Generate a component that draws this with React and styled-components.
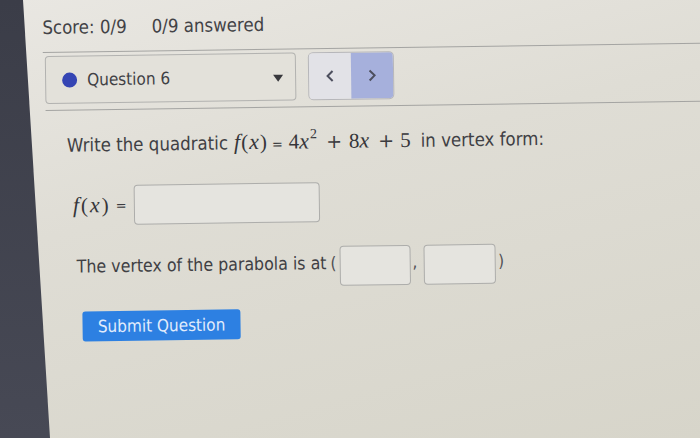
import React from "react";
import styled, { createGlobalStyle } from "styled-components";

const GlobalStyle = createGlobalStyle`
  html, body {
    margin: 0;
    padding: 0;
    background: #3c3e48;
  }
  * {
    box-sizing: border-box;
  }
`;

const Page = styled.div`
  width: 700px;
  height: 438px;
  overflow: hidden;
  background: linear-gradient(180deg, #3b3d48 0%, #474955 100%);
  font-family: "DejaVu Sans Condensed", "DejaVu Sans", sans-serif;
  color: #48484c;
`;

// photographed screen: slanted bezel on the left, content slightly tilted
const Screen = styled.div`
  height: 100%;
  padding-left: 42px;
  background: linear-gradient(165deg, #e9e7e2 0%, #dfddd5 40%, #d7d5ca 100%);
  clip-path: polygon(23px 0, 100% 0, 100% 100%, 50px 100%);
`;

const Content = styled.div`
  transform: rotate(-0.8deg);
  transform-origin: left top;
`;

const ScoreBar = styled.div`
  display: flex;
  gap: 25px;
  padding-top: 17px;
  font-size: 18.5px;
  line-height: 22px;
  color: #424246;
`;

const Rule = styled.div`
  height: 1px;
  width: 720px;
  margin-top: ${(p) => p.$top}px;
  margin-left: ${(p) => p.$left || 0}px;
  background: #a4a4a2;
`;

const NavRow = styled.div`
  display: flex;
  align-items: center;
  gap: 12px;
  margin-top: 3px;
  margin-left: 2px;
`;

const QuestionSelect = styled.div`
  width: 251px;
  height: 48px;
  display: flex;
  align-items: center;
  padding: 0 12px 0 16px;
  border: 1px solid #b2b2b0;
  border-radius: 4px;
  background: #e3e1da;
`;

const Dot = styled.span`
  width: 15px;
  height: 15px;
  border-radius: 50%;
  background: #3545b4;
  flex-shrink: 0;
`;

const SelectLabel = styled.span`
  margin-left: 10px;
  flex: 1;
  font-size: 17px;
  color: #404044;
`;

const Caret = styled.span`
  width: 0;
  height: 0;
  border-left: 5px solid transparent;
  border-right: 5px solid transparent;
  border-top: 7px solid #38383c;
  margin-top: 2px;
`;

const NavGroup = styled.div`
  display: flex;
  width: 86px;
  height: 48px;
  border: 1px solid #b6b6ba;
  border-radius: 5px;
  overflow: hidden;
`;

const NavButton = styled.div`
  flex: 1;
  display: flex;
  align-items: center;
  justify-content: center;
  background: ${(p) => (p.$active ? "#a6b0dc" : "#e2e2e7")};
`;

const Body = styled.div`
  display: flex;
  flex-direction: column;
  align-items: flex-start;
`;

const Prompt = styled.div`
  margin-top: 23px;
  margin-left: 23px;
  font-size: 18.5px;
  line-height: 22px;
  color: #404044;
  display: flex;
  align-items: baseline;
  white-space: pre;
`;

const Math = styled.span`
  display: inline-flex;
  align-items: baseline;
  font-family: "Liberation Serif", "DejaVu Serif", serif;
  font-size: 21px;
  color: #36363a;
  white-space: pre;
  margin: 0 ${(p) => p.$mr || 0}px 0 ${(p) => p.$ml || 0}px;
`;

const Var = styled.i`
  font-style: italic;
  font-size: 22px;
  margin: 0 ${(p) => p.$m ?? 1}px;
`;

const Sup = styled.span`
  font-size: 14px;
  position: relative;
  top: -10px;
  margin-left: 1px;
`;

const Op = styled.span`
  font-family: "DejaVu Sans", sans-serif;
  font-size: ${(p) => p.$size || 17}px;
  margin: 0 ${(p) => p.$r}px 0 ${(p) => p.$l}px;
  color: #3c3c40;
`;

const AnswerRow = styled.div`
  display: flex;
  align-items: center;
  margin-top: ${(p) => p.$top}px;
  margin-left: ${(p) => p.$left}px;
  font-size: 17.6px;
  color: #404044;
`;

const RowLabel = styled.span`
  margin-bottom: 6px;
  white-space: pre;
`;

const AnswerBox = styled.div`
  width: ${(p) => p.$w}px;
  height: 40px;
  border: 1.5px solid #adadab;
  border-radius: 4px;
  background: #e5e4df;
`;

const Paren = styled.span`
  font-size: 17px;
  margin: 0 ${(p) => p.$r ?? 1}px 6px ${(p) => p.$l ?? 1}px;
  color: #505054;
`;

const SubmitButton = styled.button`
  margin-top: 22px;
  margin-left: 36px;
  height: 30px;
  width: 158px;
  padding: 0;
  border: none;
  border-radius: 3px;
  background: #2d80e2;
  color: #e1ecfc;
  font-family: "DejaVu Sans Condensed", "DejaVu Sans", sans-serif;
  font-size: 17px;
`;

const Chevron = ({ dir }) => (
  <svg width="10" height="14" viewBox="0 0 10 14">
    <path
      d={dir === "left" ? "M7.5 2 L2.5 7 L7.5 12" : "M2.5 2 L7.5 7 L2.5 12"}
      fill="none"
      stroke="#4d4f5e"
      strokeWidth="2"
    />
  </svg>
);

const FX = () => (
  <Math>
    <Var $m={2}>f</Var>(<Var $m={2}>x</Var>)
  </Math>
);

export default function App() {
  return (
    <>
      <GlobalStyle />
      <Page>
        <Screen>
          <Content>
            <ScoreBar>
              <span>Score: 0/9</span>
              <span>0/9 answered</span>
            </ScoreBar>
            <Rule $top={13} />
            <NavRow>
              <QuestionSelect>
                <Dot />
                <SelectLabel>Question 6</SelectLabel>
                <Caret />
              </QuestionSelect>
              <NavGroup>
                <NavButton>
                  <Chevron dir="left" />
                </NavButton>
                <NavButton $active>
                  <Chevron dir="right" />
                </NavButton>
              </NavGroup>
            </NavRow>
            <Rule $top={6} $left={2} />
            <Body>
              <Prompt>
                {"Write the quadratic"}
                <Math $ml={5} $mr={10}>
                  <Var>f</Var>(<Var>x</Var>)
                  <Op $size={13} $l={5} $r={6}>=</Op>4<Var $m={0}>x</Var>
                  <Sup>2</Sup>
                  <Op $size={19} $l={9} $r={7}>+</Op>8<Var $m={0}>x</Var>
                  <Op $size={19} $l={9} $r={6}>+</Op>5
                </Math>
                {"in vertex form:"}
              </Prompt>
              <AnswerRow $top={27} $left={26}>
                <FX />
                <Op $size={13} $l={7} $r={7}>=</Op>
                <AnswerBox $w={186} />
              </AnswerRow>
              <AnswerRow $top={24} $left={31}>
                <RowLabel>The vertex of the parabola is at</RowLabel>
                <Paren $l={4} $r={3}>(</Paren>
                <AnswerBox $w={71} />
                <Paren $l={2} $r={6}>,</Paren>
                <AnswerBox $w={72} />
                <Paren $l={3}>)</Paren>
              </AnswerRow>
              <SubmitButton>Submit Question</SubmitButton>
            </Body>
          </Content>
        </Screen>
      </Page>
    </>
  );
}
